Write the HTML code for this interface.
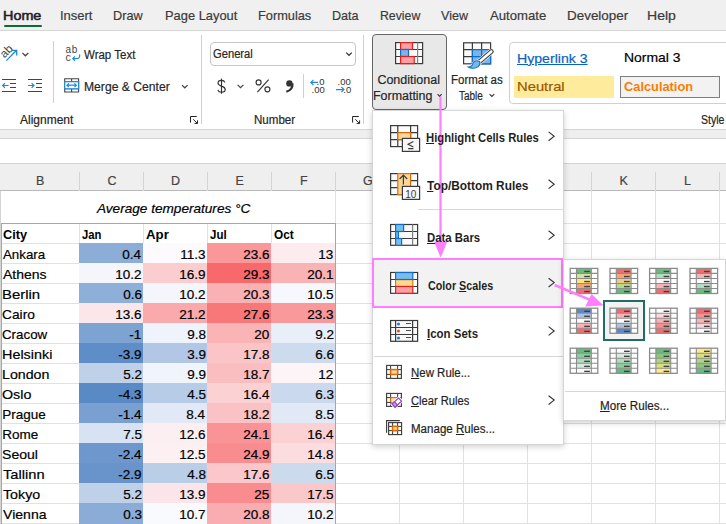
<!DOCTYPE html>
<html><head><meta charset="utf-8"><style>
*{margin:0;padding:0;box-sizing:border-box}
html,body{width:726px;height:524px;overflow:hidden;background:#fff;position:relative;font-family:"Liberation Sans", sans-serif}
.a{position:absolute}
.t{position:absolute;white-space:pre;transform-origin:0 0;-webkit-text-stroke:0.2px currentColor}
.b{-webkit-text-stroke:0}
u{text-decoration:underline;text-underline-offset:1px}
svg{position:absolute;overflow:visible}
</style></head><body>
<!-- tab bar -->
<div class=a style="left:0;top:0;width:726px;height:30px;background:#f0f0f0"></div>
<div class=a style="left:0;top:30px;width:726px;height:1px;background:#d6d6d6"></div>
<div class=a style="left:4px;top:25px;width:38px;height:2px;background:#0e6b38;border-radius:1px"></div>
<!-- ribbon bottom -->
<div class=a style="left:0;top:129px;width:726px;height:1px;background:#d4d4d4"></div>
<div class=a style="left:0;top:130px;width:726px;height:8px;background:#efefef"></div>
<div class=a style="left:0;top:138px;width:726px;height:1px;background:#d4d4d4"></div>
<div class=a style="left:0;top:163px;width:726px;height:1px;background:#d4d4d4"></div>
<div class=a style="left:0;top:164px;width:726px;height:26px;background:#efefef"></div>
<div class=a style="left:0;top:190px;width:726px;height:1px;background:#b9b9b9"></div>
<div class=a style='left:79px;top:172px;width:1px;height:18px;background:#d4d4d4'></div>
<div class=a style='left:143px;top:172px;width:1px;height:18px;background:#d4d4d4'></div>
<div class=a style='left:207px;top:172px;width:1px;height:18px;background:#d4d4d4'></div>
<div class=a style='left:271px;top:172px;width:1px;height:18px;background:#d4d4d4'></div>
<div class=a style='left:335px;top:172px;width:1px;height:18px;background:#d4d4d4'></div>
<div class=a style='left:399px;top:172px;width:1px;height:18px;background:#d4d4d4'></div>
<div class=a style='left:463px;top:172px;width:1px;height:18px;background:#d4d4d4'></div>
<div class=a style='left:527px;top:172px;width:1px;height:18px;background:#d4d4d4'></div>
<div class=a style='left:591px;top:172px;width:1px;height:18px;background:#d4d4d4'></div>
<div class=a style='left:655px;top:172px;width:1px;height:18px;background:#d4d4d4'></div>
<div class=a style='left:719px;top:172px;width:1px;height:18px;background:#d4d4d4'></div>
<!-- grid -->
<div class=a style='left:79px;top:190px;width:1px;height:334px;background:#e1e1e1'></div>
<div class=a style='left:143px;top:190px;width:1px;height:334px;background:#e1e1e1'></div>
<div class=a style='left:207px;top:190px;width:1px;height:334px;background:#e1e1e1'></div>
<div class=a style='left:271px;top:190px;width:1px;height:334px;background:#e1e1e1'></div>
<div class=a style='left:335px;top:190px;width:1px;height:334px;background:#e1e1e1'></div>
<div class=a style='left:399px;top:190px;width:1px;height:334px;background:#e1e1e1'></div>
<div class=a style='left:463px;top:190px;width:1px;height:334px;background:#e1e1e1'></div>
<div class=a style='left:527px;top:190px;width:1px;height:334px;background:#e1e1e1'></div>
<div class=a style='left:591px;top:190px;width:1px;height:334px;background:#e1e1e1'></div>
<div class=a style='left:655px;top:190px;width:1px;height:334px;background:#e1e1e1'></div>
<div class=a style='left:719px;top:190px;width:1px;height:334px;background:#e1e1e1'></div>
<div class=a style='left:0px;top:223px;width:726px;height:1px;background:#e1e1e1'></div>
<div class=a style='left:0px;top:243px;width:726px;height:1px;background:#e1e1e1'></div>
<div class=a style='left:0px;top:263px;width:726px;height:1px;background:#e1e1e1'></div>
<div class=a style='left:0px;top:283px;width:726px;height:1px;background:#e1e1e1'></div>
<div class=a style='left:0px;top:303px;width:726px;height:1px;background:#e1e1e1'></div>
<div class=a style='left:0px;top:323px;width:726px;height:1px;background:#e1e1e1'></div>
<div class=a style='left:0px;top:343px;width:726px;height:1px;background:#e1e1e1'></div>
<div class=a style='left:0px;top:363px;width:726px;height:1px;background:#e1e1e1'></div>
<div class=a style='left:0px;top:383px;width:726px;height:1px;background:#e1e1e1'></div>
<div class=a style='left:0px;top:403px;width:726px;height:1px;background:#e1e1e1'></div>
<div class=a style='left:0px;top:423px;width:726px;height:1px;background:#e1e1e1'></div>
<div class=a style='left:0px;top:443px;width:726px;height:1px;background:#e1e1e1'></div>
<div class=a style='left:0px;top:463px;width:726px;height:1px;background:#e1e1e1'></div>
<div class=a style='left:0px;top:483px;width:726px;height:1px;background:#e1e1e1'></div>
<div class=a style='left:0px;top:503px;width:726px;height:1px;background:#e1e1e1'></div>
<div class=a style='left:0px;top:523px;width:726px;height:1px;background:#e1e1e1'></div>
<div class=a style="left:1px;top:191px;width:334px;height:32px;background:#fff"></div>
<div class=a style='left:79px;top:243px;width:64px;height:21px;background:#8cadd8'></div>
<div class=a style='left:79px;top:263px;width:64px;height:21px;background:#f4f6fc'></div>
<div class=a style='left:79px;top:283px;width:64px;height:21px;background:#8eafd8'></div>
<div class=a style='left:79px;top:303px;width:64px;height:21px;background:#fbe7ea'></div>
<div class=a style='left:79px;top:323px;width:64px;height:21px;background:#7da3d2'></div>
<div class=a style='left:79px;top:343px;width:64px;height:21px;background:#5e8dc7'></div>
<div class=a style='left:79px;top:363px;width:64px;height:21px;background:#bfd1e9'></div>
<div class=a style='left:79px;top:383px;width:64px;height:21px;background:#5a8ac6'></div>
<div class=a style='left:79px;top:403px;width:64px;height:21px;background:#79a0d1'></div>
<div class=a style='left:79px;top:423px;width:64px;height:21px;background:#d7e2f2'></div>
<div class=a style='left:79px;top:443px;width:64px;height:21px;background:#6e98cd'></div>
<div class=a style='left:79px;top:463px;width:64px;height:21px;background:#6994cb'></div>
<div class=a style='left:79px;top:483px;width:64px;height:21px;background:#bfd1e9'></div>
<div class=a style='left:79px;top:503px;width:64px;height:21px;background:#8bacd7'></div>
<div class=a style='left:143px;top:243px;width:64px;height:21px;background:#fcfafd'></div>
<div class=a style='left:143px;top:263px;width:64px;height:21px;background:#fbcdcf'></div>
<div class=a style='left:143px;top:283px;width:64px;height:21px;background:#f4f6fc'></div>
<div class=a style='left:143px;top:303px;width:64px;height:21px;background:#faaaad'></div>
<div class=a style='left:143px;top:323px;width:64px;height:21px;background:#eff3fb'></div>
<div class=a style='left:143px;top:343px;width:64px;height:21px;background:#b1c7e5'></div>
<div class=a style='left:143px;top:363px;width:64px;height:21px;background:#f0f4fb'></div>
<div class=a style='left:143px;top:383px;width:64px;height:21px;background:#b7cce7'></div>
<div class=a style='left:143px;top:403px;width:64px;height:21px;background:#e0e9f5'></div>
<div class=a style='left:143px;top:423px;width:64px;height:21px;background:#fceff2'></div>
<div class=a style='left:143px;top:443px;width:64px;height:21px;background:#fcf0f3'></div>
<div class=a style='left:143px;top:463px;width:64px;height:21px;background:#bacee8'></div>
<div class=a style='left:143px;top:483px;width:64px;height:21px;background:#fbe5e8'></div>
<div class=a style='left:143px;top:503px;width:64px;height:21px;background:#f9fafe'></div>
<div class=a style='left:207px;top:243px;width:64px;height:21px;background:#f99799'></div>
<div class=a style='left:207px;top:263px;width:64px;height:21px;background:#f8696b'></div>
<div class=a style='left:207px;top:283px;width:64px;height:21px;background:#fab1b4'></div>
<div class=a style='left:207px;top:303px;width:64px;height:21px;background:#f87779'></div>
<div class=a style='left:207px;top:323px;width:64px;height:21px;background:#fab4b6'></div>
<div class=a style='left:207px;top:343px;width:64px;height:21px;background:#fbc5c8'></div>
<div class=a style='left:207px;top:363px;width:64px;height:21px;background:#fabec1'></div>
<div class=a style='left:207px;top:383px;width:64px;height:21px;background:#fbd1d3'></div>
<div class=a style='left:207px;top:403px;width:64px;height:21px;background:#fac2c5'></div>
<div class=a style='left:207px;top:423px;width:64px;height:21px;background:#f99395'></div>
<div class=a style='left:207px;top:443px;width:64px;height:21px;background:#f98c8f'></div>
<div class=a style='left:207px;top:463px;width:64px;height:21px;background:#fbc7ca'></div>
<div class=a style='left:207px;top:483px;width:64px;height:21px;background:#f98c8e'></div>
<div class=a style='left:207px;top:503px;width:64px;height:21px;background:#faadb0'></div>
<div class=a style='left:271px;top:243px;width:64px;height:21px;background:#fcecef'></div>
<div class=a style='left:271px;top:263px;width:64px;height:21px;background:#fab3b5'></div>
<div class=a style='left:271px;top:283px;width:64px;height:21px;background:#f7f8fd'></div>
<div class=a style='left:271px;top:303px;width:64px;height:21px;background:#f9999c'></div>
<div class=a style='left:271px;top:323px;width:64px;height:21px;background:#e9eff8'></div>
<div class=a style='left:271px;top:343px;width:64px;height:21px;background:#cddbef'></div>
<div class=a style='left:271px;top:363px;width:64px;height:21px;background:#fcf4f7'></div>
<div class=a style='left:271px;top:383px;width:64px;height:21px;background:#cad9ed'></div>
<div class=a style='left:271px;top:403px;width:64px;height:21px;background:#e2e9f6'></div>
<div class=a style='left:271px;top:423px;width:64px;height:21px;background:#fbd1d3'></div>
<div class=a style='left:271px;top:443px;width:64px;height:21px;background:#fbdde0'></div>
<div class=a style='left:271px;top:463px;width:64px;height:21px;background:#ccdaee'></div>
<div class=a style='left:271px;top:483px;width:64px;height:21px;background:#fbc8ca'></div>
<div class=a style='left:271px;top:503px;width:64px;height:21px;background:#f4f6fc'></div>
<!-- table borders -->
<div class=a style="left:1px;top:223px;width:335px;height:1px;background:#a6a6a6"></div>
<div class=a style="left:1px;top:223px;width:1px;height:301px;background:#a6a6a6"></div>
<div class=a style="left:335px;top:223px;width:1px;height:301px;background:#a6a6a6"></div>
<div class=a style="left:0;top:191px;width:1px;height:333px;background:#d4d4d4"></div>
<!-- ribbon dividers -->
<div class=a style="left:53px;top:41px;width:1px;height:62px;background:#d0d0d0"></div>
<div class=a style="left:201px;top:35px;width:1px;height:89px;background:#d0d0d0"></div>
<div class=a style="left:363px;top:35px;width:1px;height:89px;background:#d0d0d0"></div>
<div class=a style="left:303px;top:74px;width:1px;height:24px;background:#d0d0d0"></div>
<div class=a style="left:210px;top:42px;width:146px;height:24px;border:1px solid #c6c6c6;border-radius:4px"></div>
<!-- CF button -->
<div class=a style="left:372px;top:34px;width:75px;height:76px;background:#e8e8e8;border:1px solid #666;border-radius:4px"></div>
<!-- style gallery -->
<div class=a style="left:509px;top:42px;width:230px;height:62px;border:1px solid #d0d0d0;border-radius:4px"></div>
<div class=a style="left:514px;top:76px;width:100px;height:22px;background:#ffeb9c"></div>
<div class=a style="left:620px;top:76px;width:100px;height:22px;background:#f2f2f2;border:1px solid #7f7f7f"></div>
<svg style="left:0;top:0" width="726" height="524" viewBox="0 0 726 524">
<g fill="none" stroke-linecap="butt">
<!-- orientation icon -->
<text x="0" y="0" transform="translate(4.4,58.6) rotate(-45)" font-family="Liberation Sans" font-size="11.6" fill="#444">ab</text>
<path d="M6.3 60.6 L16.6 50.3 M11.6 50.4 H16.7 V55.4" stroke="#1e88d8" stroke-width="1.3"/>
<path d="M22.5 53 L25.4 55.8 L28.3 53" stroke="#444" stroke-width="1.2"/>
<!-- decrease indent -->
<path d="M2 79.5 H16 M10 83.5 H16 M10 87.5 H16 M2 91.5 H16" stroke="#444" stroke-width="1"/>
<path d="M8.6 85.5 H2.6 M5 83.1 L2.6 85.5 L5 87.9" stroke="#1e88d8" stroke-width="1.2"/>
<!-- increase indent -->
<path d="M28 79.5 H42 M36 83.5 H42 M36 87.5 H42 M28 91.5 H42" stroke="#444" stroke-width="1"/>
<path d="M28 85.5 H34 M31.6 83.1 L34 85.5 L31.6 87.9" stroke="#1e88d8" stroke-width="1.2"/>
<!-- wrap text -->
<text x="65.6" y="53.4" font-family="Liberation Sans" font-size="10" letter-spacing="0.6" fill="#444">ab</text>
<text x="65.6" y="61" font-family="Liberation Sans" font-size="10.5" fill="#444">c</text>
<path d="M79.6 54.4 Q80.5 58.6 76 58.6 H72.8 M75 56.4 L72.8 58.6 L75 60.8" stroke="#1e88d8" stroke-width="1.2"/>
<!-- merge & center -->
<path d="M64.7 78.7 H78.6 V92 H64.7 Z M64.7 81.7 H78.6 M64.7 88.8 H78.6 M71.6 78.7 V81.7 M71.6 88.8 V92" stroke="#444" stroke-width="1.1"/>
<rect x="64.7" y="81.7" width="13.9" height="7.1" stroke="#1e88d8" stroke-width="1.2" fill="#fff"/>
<path d="M67 85.2 H76.3 M68.8 83.4 L67 85.2 L68.8 87 M74.5 83.4 L76.3 85.2 L74.5 87" stroke="#1e88d8" stroke-width="1.2"/>
<path d="M182 85.1 L184.8 87.8 L187.6 85.1" stroke="#444" stroke-width="1.2"/>
<!-- launchers -->
<path d="M190.5 122.6 V116.5 H196.7 M193.2 119.3 L197.3 123.3 M194.5 123.4 H197.5 V120.4" stroke="#222" stroke-width="1"/>
<path d="M352.6 122.6 V116.5 H358.8 M355.3 119.3 L359.4 123.3 M356.6 123.4 H359.6 V120.4" stroke="#222" stroke-width="1"/>
<!-- general chevron -->
<path d="M346.2 52.6 L349 55.3 L351.8 52.6" stroke="#333" stroke-width="1.2"/>
<!-- $ chevron -->
<path d="M237.6 84.8 L240.5 87.7 L243.4 84.8" stroke="#444" stroke-width="1.2"/>
<!-- comma style -->
<path d="M289.6 80.6 a3.4 3.4 0 1 1 0 6.4 c 1.6 0.6 3.4 -0.3 4.6 -3" stroke="none" fill="none"/>
<circle cx="289.4" cy="83.4" r="3.2" fill="#333"/>
<path d="M292.5 83.4 C292.8 87.8 290.5 90.6 286.3 91.8" stroke="#333" stroke-width="2.2"/>
<!-- decimal icons -->
<path d="M318 82.4 H310.8 M313.4 79.8 L310.8 82.4 L313.4 85" stroke="#1e88d8" stroke-width="1.1"/>
<path d="M336 89.6 H344 M341.4 87 L344 89.6 L341.4 92.2" stroke="#1e88d8" stroke-width="1.1"/>
<!-- CF chevron -->
<path d="M437.6 94.2 L439.6 96.4 L441.6 94.2" stroke="#333" stroke-width="1.1"/>
<!-- FaT chevron -->
<path d="M489.6 94.1 L491.9 96.5 L494.2 94.1" stroke="#333" stroke-width="1.1"/>
</g>
<g font-family="Liberation Sans" fill="#333">


<text x="316.6" y="84.9" font-size="9.5">.0</text>
<text x="311.5" y="93" font-size="9.5">.00</text>
<text x="337.5" y="84.9" font-size="9.5">.00</text>
<text x="343.3" y="93" font-size="9.5">.0</text>
</g>
<g fill="none" stroke="#333" stroke-width="1.15">
<path d="M221.5 78.6 V93.8"/>
<path d="M225 82.4 C224.4 80.9 223 80.3 221.4 80.3 C219.4 80.3 218 81.4 218 83.1 C218 85 219.8 85.6 221.6 86.1 C223.6 86.7 225.2 87.4 225.2 89.5 C225.2 91.3 223.6 92.2 221.6 92.2 C219.8 92.2 218.4 91.5 217.8 90"/>
<circle cx="258.6" cy="82.4" r="2.5"/>
<circle cx="267.4" cy="89.3" r="2.5"/>
<path d="M268.6 79.6 L257.4 92.2"/>
</g>
<!-- CF icon -->
<g stroke-width="1.2">
<rect x="395.6" y="42.6" width="27" height="21" fill="#fafafa" stroke="#3a3a3a"/>
<path d="M395.6 49.5 H422.6 M395.6 56.5 H422.6 M400.6 42.6 V63.6" stroke="#3a3a3a" fill="none"/>
<path d="M417.6 42.6 V63.6" stroke="#888" fill="none"/>
<rect x="400.6" y="42.6" width="11.9" height="6.9" fill="#ff9ea3" stroke="#e0201b"/>
<rect x="400.6" y="49.5" width="7.9" height="7" fill="#7cb4e8" stroke="#0b6fce"/>
<rect x="400.6" y="56.5" width="13.6" height="7.1" fill="#ff9ea3" stroke="#e0201b"/>
</g>
<!-- Format as table icon -->
<g stroke-width="1.2">
<rect x="463.6" y="42.8" width="27" height="21" fill="#fafafa" stroke="#3a3a3a"/>
<path d="M463.6 49.6 H490.6 M463.6 56.6 H490.6 M472.4 42.8 V63.8 M481.6 42.8 V63.8" stroke="#3a3a3a" fill="none"/>
<path d="M472.4 49.6 H490.6 V63.8 H472.4 Z" fill="#7cb4e8" stroke="#0b6fce"/>
<path d="M481.6 49.6 V63.8 M472.4 56.6 H490.6" stroke="#0b6fce" fill="none"/>
<g transform="translate(485.6 56.4) rotate(-40.8)"><rect x="-11" y="-2.9" width="21" height="5.8" rx="2.9" fill="#fff"/><rect x="-9.6" y="-1.8" width="19" height="3.6" rx="1.8" fill="#fff" stroke="#3a3a3a" stroke-width="1.1"/></g>
<path d="M479.6 61.6 C476.4 59.8 473.2 61.2 472.6 64 C472.2 65.8 470.8 66.8 468.2 67 C470.4 68.6 475.6 68.9 478.2 66.6 C479.8 65.2 480.4 63.2 479.6 61.6 Z" fill="#fff" stroke="#fff" stroke-width="2"/>
<path d="M479.6 61.6 C476.4 59.8 473.2 61.2 472.6 64 C472.2 65.8 470.8 66.8 468.2 67 C470.4 68.6 475.6 68.9 478.2 66.6 C479.8 65.2 480.4 63.2 479.6 61.6 Z" fill="#7cb4e8" stroke="#0b6fce" stroke-width="1.1"/>
</g>
</svg>

<div class='t' style='top:9.25px;font-size:13px;line-height:13px;color:#1f1f1f;left:3.39px;transform:scaleX(1.106);-webkit-text-stroke:0.55px currentColor;'>Home</div>
<div class='t' style='top:9.25px;font-size:13px;line-height:13px;color:#3b3b3b;left:59.90px;'>Insert</div>
<div class='t' style='top:9.25px;font-size:13px;line-height:13px;color:#3b3b3b;left:113.32px;transform:scaleX(0.977);'>Draw</div>
<div class='t' style='top:9.25px;font-size:13px;line-height:13px;color:#3b3b3b;left:165.01px;transform:scaleX(0.990);'>Page Layout</div>
<div class='t' style='top:9.25px;font-size:13px;line-height:13px;color:#3b3b3b;left:258.42px;transform:scaleX(0.983);'>Formulas</div>
<div class='t' style='top:9.25px;font-size:13px;line-height:13px;color:#3b3b3b;left:332.33px;transform:scaleX(0.967);'>Data</div>
<div class='t' style='top:9.25px;font-size:13px;line-height:13px;color:#3b3b3b;left:379.85px;transform:scaleX(0.945);'>Review</div>
<div class='t' style='top:9.25px;font-size:13px;line-height:13px;color:#3b3b3b;left:441.00px;transform:scaleX(0.964);'>View</div>
<div class='t' style='top:9.25px;font-size:13px;line-height:13px;color:#3b3b3b;left:490.00px;transform:scaleX(1.011);'>Automate</div>
<div class='t' style='top:9.25px;font-size:13px;line-height:13px;color:#3b3b3b;left:566.57px;transform:scaleX(1.033);'>Developer</div>
<div class='t' style='top:9.25px;font-size:13px;line-height:13px;color:#3b3b3b;left:646.92px;transform:scaleX(1.080);'>Help</div>
<div class='t' style='top:48.67px;font-size:12.5px;line-height:12.5px;color:#262626;left:84.10px;transform:scaleX(0.920);'>Wrap Text</div>
<div class='t' style='top:81.28px;font-size:12.5px;line-height:12.5px;color:#262626;left:83.53px;transform:scaleX(0.971);'>Merge &amp; Center</div>
<div class='t' style='top:114.30px;font-size:12px;line-height:12px;color:#262626;left:20.00px;'>Alignment</div>
<div class='t' style='top:47.98px;font-size:12.5px;line-height:12.5px;color:#262626;left:213.10px;transform:scaleX(0.895);'>General</div>
<div class='t' style='top:113.80px;font-size:12px;line-height:12px;color:#262626;left:253.54px;transform:scaleX(0.964);'>Number</div>
<div class='t' style='top:74.38px;font-size:12.5px;line-height:12.5px;color:#262626;left:377.40px;'>Conditional</div>
<div class='t' style='top:90.38px;font-size:12.5px;line-height:12.5px;color:#262626;left:373.31px;transform:scaleX(0.995);'>Formatting</div>
<div class='t' style='top:74.38px;font-size:12.5px;line-height:12.5px;color:#262626;left:450.88px;transform:scaleX(0.920);'>Format as</div>
<div class='t' style='top:89.97px;font-size:12.5px;line-height:12.5px;color:#262626;left:459.00px;transform:scaleX(0.800);'>Table</div>
<div class='t' style='top:51.52px;font-size:13.5px;line-height:13.5px;color:#0563c1;left:517.45px;transform:scaleX(1.045);'><u>Hyperlink 3</u></div>
<div class='t' style='top:51.23px;font-size:13.5px;line-height:13.5px;color:#000000;left:623.67px;transform:scaleX(1.032);'>Normal 3</div>
<div class='t' style='top:79.73px;font-size:13.5px;line-height:13.5px;color:#9c5700;left:517.40px;transform:scaleX(1.095);'>Neutral</div>
<div class='t b' style='top:79.55px;font-size:13px;line-height:13px;font-weight:700;color:#fa7d00;left:624.00px;transform:scaleX(0.986);'>Calculation</div>
<div class='t' style='top:113.60px;font-size:12px;line-height:12px;color:#262626;left:700.62px;transform:scaleX(0.880);'>Style</div>
<div class='t' style='top:174.97px;font-size:12.5px;line-height:12.5px;color:#444444;left:36.00px;'>B</div>
<div class='t' style='top:174.97px;font-size:12.5px;line-height:12.5px;color:#444444;left:107.50px;'>C</div>
<div class='t' style='top:174.97px;font-size:12.5px;line-height:12.5px;color:#444444;left:171.00px;'>D</div>
<div class='t' style='top:174.97px;font-size:12.5px;line-height:12.5px;color:#444444;left:235.50px;'>E</div>
<div class='t' style='top:174.97px;font-size:12.5px;line-height:12.5px;color:#444444;left:300.00px;'>F</div>
<div class='t' style='top:174.97px;font-size:12.5px;line-height:12.5px;color:#444444;left:363.00px;'>G</div>
<div class='t' style='top:174.97px;font-size:12.5px;line-height:12.5px;color:#444444;left:619.50px;'>K</div>
<div class='t' style='top:174.97px;font-size:12.5px;line-height:12.5px;color:#444444;left:684.00px;'>L</div>
<div class='t' style='top:201.83px;font-size:13.5px;line-height:13.5px;font-style:italic;color:#000000;left:97.00px;transform:scaleX(1.007);'>Average temperatures °C</div>
<div class='t b' style='top:227.65px;font-size:13px;line-height:13px;font-weight:700;color:#000000;left:3.20px;transform:scaleX(0.979);'>City</div>
<div class='t b' style='top:227.65px;font-size:13px;line-height:13px;font-weight:700;color:#000000;left:82.10px;transform:scaleX(0.864);'>Jan</div>
<div class='t b' style='top:227.65px;font-size:13px;line-height:13px;font-weight:700;color:#000000;left:146.20px;transform:scaleX(1.018);'>Apr</div>
<div class='t b' style='top:227.65px;font-size:13px;line-height:13px;font-weight:700;color:#000000;left:210.00px;transform:scaleX(0.889);'>Jul</div>
<div class='t b' style='top:227.65px;font-size:13px;line-height:13px;font-weight:700;color:#000000;left:274.40px;transform:scaleX(0.909);'>Oct</div>
<div class='t' style='top:247.63px;font-size:13.5px;line-height:13.5px;color:#000000;left:3.20px;transform:scaleX(0.984);'>Ankara</div>
<div class='t' style='top:247.63px;font-size:13.5px;line-height:13.5px;color:#000000;left:122.20px;'>0.4</div>
<div class='t' style='top:247.63px;font-size:13.5px;line-height:13.5px;color:#000000;left:180.20px;'>11.3</div>
<div class='t' style='top:247.63px;font-size:13.5px;line-height:13.5px;color:#000000;left:243.20px;'>23.6</div>
<div class='t' style='top:247.63px;font-size:13.5px;line-height:13.5px;color:#000000;left:318.20px;'>13</div>
<div class='t' style='top:267.62px;font-size:13.5px;line-height:13.5px;color:#000000;left:3.20px;transform:scaleX(1.038);'>Athens</div>
<div class='t' style='top:267.62px;font-size:13.5px;line-height:13.5px;color:#000000;left:115.20px;'>10.2</div>
<div class='t' style='top:267.62px;font-size:13.5px;line-height:13.5px;color:#000000;left:179.20px;'>16.9</div>
<div class='t' style='top:267.62px;font-size:13.5px;line-height:13.5px;color:#000000;left:243.20px;'>29.3</div>
<div class='t' style='top:267.62px;font-size:13.5px;line-height:13.5px;color:#000000;left:307.20px;'>20.1</div>
<div class='t' style='top:287.62px;font-size:13.5px;line-height:13.5px;color:#000000;left:2.10px;transform:scaleX(1.103);'>Berlin</div>
<div class='t' style='top:287.62px;font-size:13.5px;line-height:13.5px;color:#000000;left:123.20px;'>0.6</div>
<div class='t' style='top:287.62px;font-size:13.5px;line-height:13.5px;color:#000000;left:179.20px;'>10.2</div>
<div class='t' style='top:287.62px;font-size:13.5px;line-height:13.5px;color:#000000;left:243.20px;'>20.3</div>
<div class='t' style='top:287.62px;font-size:13.5px;line-height:13.5px;color:#000000;left:307.20px;'>10.5</div>
<div class='t' style='top:307.62px;font-size:13.5px;line-height:13.5px;color:#000000;left:2.18px;transform:scaleX(1.019);'>Cairo</div>
<div class='t' style='top:307.62px;font-size:13.5px;line-height:13.5px;color:#000000;left:115.20px;'>13.6</div>
<div class='t' style='top:307.62px;font-size:13.5px;line-height:13.5px;color:#000000;left:179.20px;'>21.2</div>
<div class='t' style='top:307.62px;font-size:13.5px;line-height:13.5px;color:#000000;left:243.20px;'>27.6</div>
<div class='t' style='top:307.62px;font-size:13.5px;line-height:13.5px;color:#000000;left:307.20px;'>23.3</div>
<div class='t' style='top:327.62px;font-size:13.5px;line-height:13.5px;color:#000000;left:2.21px;transform:scaleX(0.987);'>Cracow</div>
<div class='t' style='top:327.62px;font-size:13.5px;line-height:13.5px;color:#000000;left:129.20px;'>-1</div>
<div class='t' style='top:327.62px;font-size:13.5px;line-height:13.5px;color:#000000;left:187.20px;'>9.8</div>
<div class='t' style='top:327.62px;font-size:13.5px;line-height:13.5px;color:#000000;left:254.20px;'>20</div>
<div class='t' style='top:327.62px;font-size:13.5px;line-height:13.5px;color:#000000;left:315.20px;'>9.2</div>
<div class='t' style='top:347.62px;font-size:13.5px;line-height:13.5px;color:#000000;left:2.13px;transform:scaleX(1.065);'>Helsinki</div>
<div class='t' style='top:347.62px;font-size:13.5px;line-height:13.5px;color:#000000;left:118.20px;'>-3.9</div>
<div class='t' style='top:347.62px;font-size:13.5px;line-height:13.5px;color:#000000;left:187.20px;'>3.9</div>
<div class='t' style='top:347.62px;font-size:13.5px;line-height:13.5px;color:#000000;left:243.20px;'>17.8</div>
<div class='t' style='top:347.62px;font-size:13.5px;line-height:13.5px;color:#000000;left:315.20px;'>6.6</div>
<div class='t' style='top:367.62px;font-size:13.5px;line-height:13.5px;color:#000000;left:2.15px;transform:scaleX(1.053);'>London</div>
<div class='t' style='top:367.62px;font-size:13.5px;line-height:13.5px;color:#000000;left:123.20px;'>5.2</div>
<div class='t' style='top:367.62px;font-size:13.5px;line-height:13.5px;color:#000000;left:187.20px;'>9.9</div>
<div class='t' style='top:367.62px;font-size:13.5px;line-height:13.5px;color:#000000;left:243.20px;'>18.7</div>
<div class='t' style='top:367.62px;font-size:13.5px;line-height:13.5px;color:#000000;left:318.20px;'>12</div>
<div class='t' style='top:387.62px;font-size:13.5px;line-height:13.5px;color:#000000;left:2.14px;transform:scaleX(1.058);'>Oslo</div>
<div class='t' style='top:387.62px;font-size:13.5px;line-height:13.5px;color:#000000;left:118.20px;'>-4.3</div>
<div class='t' style='top:387.62px;font-size:13.5px;line-height:13.5px;color:#000000;left:187.20px;'>4.5</div>
<div class='t' style='top:387.62px;font-size:13.5px;line-height:13.5px;color:#000000;left:243.20px;'>16.4</div>
<div class='t' style='top:387.62px;font-size:13.5px;line-height:13.5px;color:#000000;left:315.20px;'>6.3</div>
<div class='t' style='top:407.62px;font-size:13.5px;line-height:13.5px;color:#000000;left:2.20px;'>Prague</div>
<div class='t' style='top:407.62px;font-size:13.5px;line-height:13.5px;color:#000000;left:118.20px;'>-1.4</div>
<div class='t' style='top:407.62px;font-size:13.5px;line-height:13.5px;color:#000000;left:186.20px;'>8.4</div>
<div class='t' style='top:407.62px;font-size:13.5px;line-height:13.5px;color:#000000;left:243.20px;'>18.2</div>
<div class='t' style='top:407.62px;font-size:13.5px;line-height:13.5px;color:#000000;left:315.20px;'>8.5</div>
<div class='t' style='top:427.62px;font-size:13.5px;line-height:13.5px;color:#000000;left:2.20px;'>Rome</div>
<div class='t' style='top:427.62px;font-size:13.5px;line-height:13.5px;color:#000000;left:123.20px;'>7.5</div>
<div class='t' style='top:427.62px;font-size:13.5px;line-height:13.5px;color:#000000;left:179.20px;'>12.6</div>
<div class='t' style='top:427.62px;font-size:13.5px;line-height:13.5px;color:#000000;left:243.20px;'>24.1</div>
<div class='t' style='top:427.62px;font-size:13.5px;line-height:13.5px;color:#000000;left:307.20px;'>16.4</div>
<div class='t' style='top:447.62px;font-size:13.5px;line-height:13.5px;color:#000000;left:2.16px;transform:scaleX(1.042);'>Seoul</div>
<div class='t' style='top:447.62px;font-size:13.5px;line-height:13.5px;color:#000000;left:118.20px;'>-2.4</div>
<div class='t' style='top:447.62px;font-size:13.5px;line-height:13.5px;color:#000000;left:179.20px;'>12.5</div>
<div class='t' style='top:447.62px;font-size:13.5px;line-height:13.5px;color:#000000;left:243.20px;'>24.9</div>
<div class='t' style='top:447.62px;font-size:13.5px;line-height:13.5px;color:#000000;left:307.20px;'>14.8</div>
<div class='t' style='top:467.62px;font-size:13.5px;line-height:13.5px;color:#000000;left:3.20px;transform:scaleX(1.087);'>Tallinn</div>
<div class='t' style='top:467.62px;font-size:13.5px;line-height:13.5px;color:#000000;left:118.20px;'>-2.9</div>
<div class='t' style='top:467.62px;font-size:13.5px;line-height:13.5px;color:#000000;left:187.20px;'>4.8</div>
<div class='t' style='top:467.62px;font-size:13.5px;line-height:13.5px;color:#000000;left:243.20px;'>17.6</div>
<div class='t' style='top:467.62px;font-size:13.5px;line-height:13.5px;color:#000000;left:315.20px;'>6.5</div>
<div class='t' style='top:487.62px;font-size:13.5px;line-height:13.5px;color:#000000;left:3.20px;transform:scaleX(1.054);'>Tokyo</div>
<div class='t' style='top:487.62px;font-size:13.5px;line-height:13.5px;color:#000000;left:123.20px;'>5.2</div>
<div class='t' style='top:487.62px;font-size:13.5px;line-height:13.5px;color:#000000;left:179.20px;'>13.9</div>
<div class='t' style='top:487.62px;font-size:13.5px;line-height:13.5px;color:#000000;left:254.20px;'>25</div>
<div class='t' style='top:487.62px;font-size:13.5px;line-height:13.5px;color:#000000;left:307.20px;'>17.5</div>
<div class='t' style='top:507.62px;font-size:13.5px;line-height:13.5px;color:#000000;left:3.20px;transform:scaleX(1.043);'>Vienna</div>
<div class='t' style='top:507.62px;font-size:13.5px;line-height:13.5px;color:#000000;left:123.20px;'>0.3</div>
<div class='t' style='top:507.62px;font-size:13.5px;line-height:13.5px;color:#000000;left:179.20px;'>10.7</div>
<div class='t' style='top:507.62px;font-size:13.5px;line-height:13.5px;color:#000000;left:243.20px;'>20.8</div>
<div class='t' style='top:507.62px;font-size:13.5px;line-height:13.5px;color:#000000;left:307.20px;'>10.2</div>
<!-- menu -->
<div class=a style="left:372px;top:110px;width:192px;height:335px;background:#fff;border:1px solid #d6d6d6;box-shadow:0 2px 6px rgba(0,0,0,.18)"></div>
<div class=a style="left:418px;top:209px;width:145px;height:1px;background:#d8d8d8"></div>
<div class=a style="left:374px;top:356px;width:189px;height:1px;background:#d8d8d8"></div>
<div class=a style="left:372px;top:258px;width:191px;height:50px;background:#f2f2f2;border:2px solid #ff7dff"></div>
<!-- submenu -->
<div class=a style="left:563px;top:259px;width:163px;height:162px;background:#fff;border:1px solid #d6d6d6;box-shadow:0 2px 6px rgba(0,0,0,.18)"></div>
<div class=a style="left:565px;top:391px;width:160px;height:1px;background:#d8d8d8"></div>
<div class=a style="left:603px;top:300px;width:42px;height:41px;background:#f3f3f3;border:2px solid #1e6e66"></div>
<svg style="left:0;top:0" width="726" height="524" viewBox="0 0 726 524">
<rect x="390.6" y="125.6" width="27" height="21" fill="#fafafa" stroke="#3a3a3a" stroke-width="1.2"/>
<path d="M390.6 132.7 H417.6 M390.6 139.6 H417.6 M397.8 125.6 V146.6 M410.6 125.6 V139.4" stroke="#3a3a3a" stroke-width="1.2" fill="none"/>
<rect x="397.8" y="132.7" width="12.8" height="6.9" fill="#fbd89a" stroke="#e06c00" stroke-width="1.2"/>
<rect x="402.4" y="138.4" width="17.2" height="13" fill="#f7f7f7" stroke="#3a3a3a" stroke-width="1.2"/>
<path d="M413.4 141.4 L408 144.2 L413.4 147 M408.2 148.6 H413.4" stroke="#3a3a3a" stroke-width="1.1" fill="none"/>
<rect x="390.6" y="173.6" width="27" height="21" fill="#fafafa" stroke="#3a3a3a" stroke-width="1.2"/>
<path d="M390.6 180.7 H417.6 M390.6 187.6 H417.6" stroke="#3a3a3a" stroke-width="1.2" fill="none"/>
<rect x="397.8" y="173.6" width="12.8" height="21" fill="#fbd89a" stroke="#e06c00" stroke-width="1.2"/>
<path d="M403.4 175.6 V184.6 M399.6 179 L403.4 175.2 L407.2 179" stroke="#3a3a3a" stroke-width="1.2" fill="none"/>
<rect x="402.4" y="186.4" width="17.2" height="13" fill="#f7f7f7" stroke="#3a3a3a" stroke-width="1.2"/>
<text x="405.2" y="197.6" font-family="Liberation Sans" font-size="10" fill="#3a3a3a">10</text>
<rect x="390.6" y="224.5" width="27" height="20.8" fill="#fafafa" stroke="#3a3a3a" stroke-width="1.2"/>
<path d="M390.6 231.5 H417.6 M390.6 238.5 H417.6 M395.6 224.5 V245.3" stroke="#3a3a3a" stroke-width="1.2" fill="none"/>
<path d="M412.6 224.5 V245.3" stroke="#808080" stroke-width="1.2" fill="none"/>
<rect x="395.6" y="224.5" width="8" height="7" fill="#7cbcea" stroke="#0b6fce" stroke-width="1.2"/>
<rect x="395.6" y="231.5" width="2.8" height="7" fill="#7cbcea" stroke="#0b6fce" stroke-width="1.2"/>
<rect x="395.6" y="238.5" width="6" height="6.8" fill="#7cbcea" stroke="#0b6fce" stroke-width="1.2"/>
<rect x="390.6" y="272.5" width="27" height="20.8" fill="#fff" stroke="#3a3a3a" stroke-width="1.2"/>
<path d="M390.6 279.5 H417.6 M390.6 286.5 H417.6" stroke="#3a3a3a" stroke-width="1.2" fill="none"/>
<rect x="395.6" y="279.5" width="17.2" height="7" fill="#fcd98c" stroke="#e47a00" stroke-width="1.2"/>
<rect x="395.6" y="272.5" width="17.2" height="7" fill="#7cbcea" stroke="#0b6fce" stroke-width="1.2"/>
<rect x="395.6" y="286.5" width="17.2" height="6.8" fill="#ff9ea3" stroke="#e0201b" stroke-width="1.2"/>
<rect x="390.6" y="320.5" width="27" height="20.8" fill="#fafafa" stroke="#3a3a3a" stroke-width="1.2"/>
<path d="M390.6 327.5 H417.6 M390.6 334.5 H417.6 M395.6 320.5 V341.3 M412.6 320.5 V341.3" stroke="#3a3a3a" stroke-width="1.2" fill="none"/>
<circle cx="398.5" cy="324" r="1.6" fill="#1a85d6"/>
<path d="M406 323.5 H411" stroke="#505050" stroke-width="1"/>
<circle cx="398.5" cy="331" r="1.6" fill="#f04e30"/>
<path d="M406 330.5 H411" stroke="#505050" stroke-width="1"/>
<circle cx="398.5" cy="338" r="1.6" fill="#1a85d6"/>
<path d="M406 337.5 H411" stroke="#505050" stroke-width="1"/>
<rect x="386.6" y="365.4" width="14.799999999999955" height="13.0" fill="#fafafa" stroke="#3a3a3a" stroke-width="1.1"/>
<path d="M386.6 369.6 H401.4 M386.6 374.4 H401.4 M390.6 365.4 V378.4 M397.6 365.4 V378.4" stroke="#3a3a3a" stroke-width="1" fill="none"/>
<rect x="390.6" y="369.6" width="7" height="4.8" fill="#fbd89a" stroke="#e06c00" stroke-width="1.5"/>
<rect x="386.6" y="393.4" width="14.799999999999955" height="13.0" fill="#fafafa" stroke="#3a3a3a" stroke-width="1.1"/>
<path d="M386.6 397.6 H401.4 M386.6 402.4 H401.4 M390.6 393.4 V406.4 M397.6 393.4 V406.4" stroke="#3a3a3a" stroke-width="1" fill="none"/>
<path d="M390.8 402.4 V397.6 H397.4" fill="none" stroke="#e06c00" stroke-width="1.4"/>
<path d="M391.4 402 V398.2 H397 L391.4 402 Z" fill="#fbd89a"/>
<g transform="translate(396.8 402.6) rotate(-42)"><rect x="-6" y="-3.4" width="12" height="6.8" fill="#fff"/><rect x="-4.4" y="-2.2" width="8.8" height="4.4" fill="#fff" stroke="#9b3fc0" stroke-width="1.2"/><rect x="-4.4" y="-2.2" width="3.2" height="4.4" fill="#c79be0" stroke="#9b3fc0" stroke-width="1.2"/></g>
<path d="M386.6 432.8 V420.6 H399.8" fill="none" stroke="#3a3a3a" stroke-width="1.1"/>
<rect x="388.6" y="422.6" width="13.0" height="12.0" fill="#fafafa" stroke="#3a3a3a" stroke-width="1.1"/>
<path d="M388.6 426.4 H401.6 M388.6 430.6 H401.6 M392.6 422.6 V434.6 M397.6 422.6 V434.6" stroke="#3a3a3a" stroke-width="1" fill="none"/>
<rect x="392.6" y="426.4" width="5" height="4.2" fill="#fbd89a" stroke="#e06c00" stroke-width="1.5"/>
<path d="M548.6 131.9 L554.2 136.3 L548.6 140.70000000000002" fill="none" stroke="#333" stroke-width="1.1"/>
<path d="M548.6 179.79999999999998 L554.2 184.2 L548.6 188.6" fill="none" stroke="#333" stroke-width="1.1"/>
<path d="M548.6 230.79999999999998 L554.2 235.2 L548.6 239.6" fill="none" stroke="#333" stroke-width="1.1"/>
<path d="M548.6 278.20000000000005 L554.2 282.6 L548.6 287.0" fill="none" stroke="#333" stroke-width="1.1"/>
<path d="M548.6 326.6 L554.2 331 L548.6 335.4" fill="none" stroke="#333" stroke-width="1.1"/>
<path d="M548.6 395.70000000000005 L554.2 400.1 L548.6 404.5" fill="none" stroke="#333" stroke-width="1.1"/>
<rect x="570.2" y="268.4" width="27.6" height="25.1" fill="#fff"/>
<rect x="576.5" y="268.40" width="14.8" height="5.02" fill="#63be7b"/>
<path d="M584.2 271.50 H589.9" stroke="#404040" stroke-width="1.4"/>
<rect x="576.5" y="273.42" width="14.8" height="5.02" fill="#d5e39a"/>
<path d="M584.2 276.52 H589.9" stroke="#404040" stroke-width="1.4"/>
<rect x="576.5" y="278.44" width="14.8" height="5.02" fill="#ffe57f"/>
<path d="M584.2 281.54 H589.9" stroke="#404040" stroke-width="1.4"/>
<rect x="576.5" y="283.46" width="14.8" height="5.02" fill="#fba46f"/>
<path d="M584.2 286.56 H589.9" stroke="#404040" stroke-width="1.4"/>
<rect x="576.5" y="288.48" width="14.8" height="5.02" fill="#f8696b"/>
<path d="M584.2 291.58 H589.9" stroke="#404040" stroke-width="1.4"/>
<rect x="570.2" y="268.4" width="27.6" height="25.1" fill="none" stroke="#8c8c8c" stroke-width="1.3"/>
<path d="M570.2 273.42 H597.8000000000001M570.2 278.44 H597.8000000000001M570.2 283.46 H597.8000000000001M570.2 288.48 H597.8000000000001 M576.5 268.4 V293.5 M591.3 268.4 V293.5" stroke="#8c8c8c" stroke-width="1.1" fill="none"/>
<rect x="610.0" y="268.4" width="27.6" height="25.1" fill="#fff"/>
<rect x="616.3" y="268.40" width="14.8" height="5.02" fill="#f8696b"/>
<path d="M624.0 271.50 H629.7" stroke="#404040" stroke-width="1.4"/>
<rect x="616.3" y="273.42" width="14.8" height="5.02" fill="#fba46f"/>
<path d="M624.0 276.52 H629.7" stroke="#404040" stroke-width="1.4"/>
<rect x="616.3" y="278.44" width="14.8" height="5.02" fill="#f3cb7f"/>
<path d="M624.0 281.54 H629.7" stroke="#404040" stroke-width="1.4"/>
<rect x="616.3" y="283.46" width="14.8" height="5.02" fill="#b5dc86"/>
<path d="M624.0 286.56 H629.7" stroke="#404040" stroke-width="1.4"/>
<rect x="616.3" y="288.48" width="14.8" height="5.02" fill="#63be7b"/>
<path d="M624.0 291.58 H629.7" stroke="#404040" stroke-width="1.4"/>
<rect x="610.0" y="268.4" width="27.6" height="25.1" fill="none" stroke="#8c8c8c" stroke-width="1.3"/>
<path d="M610.0 273.42 H637.6M610.0 278.44 H637.6M610.0 283.46 H637.6M610.0 288.48 H637.6 M616.3 268.4 V293.5 M631.1 268.4 V293.5" stroke="#8c8c8c" stroke-width="1.1" fill="none"/>
<rect x="649.6" y="268.4" width="27.6" height="25.1" fill="#fff"/>
<rect x="655.9" y="268.40" width="14.8" height="5.02" fill="#63be7b"/>
<path d="M663.6 271.50 H669.3" stroke="#404040" stroke-width="1.4"/>
<rect x="655.9" y="273.42" width="14.8" height="5.02" fill="#b0ddbd"/>
<path d="M663.6 276.52 H669.3" stroke="#404040" stroke-width="1.4"/>
<rect x="655.9" y="278.44" width="14.8" height="5.02" fill="#fcfcff"/>
<path d="M663.6 281.54 H669.3" stroke="#404040" stroke-width="1.4"/>
<rect x="655.9" y="283.46" width="14.8" height="5.02" fill="#fab2b5"/>
<path d="M663.6 286.56 H669.3" stroke="#404040" stroke-width="1.4"/>
<rect x="655.9" y="288.48" width="14.8" height="5.02" fill="#f8696b"/>
<path d="M663.6 291.58 H669.3" stroke="#404040" stroke-width="1.4"/>
<rect x="649.6" y="268.4" width="27.6" height="25.1" fill="none" stroke="#8c8c8c" stroke-width="1.3"/>
<path d="M649.6 273.42 H677.2M649.6 278.44 H677.2M649.6 283.46 H677.2M649.6 288.48 H677.2 M655.9 268.4 V293.5 M670.7 268.4 V293.5" stroke="#8c8c8c" stroke-width="1.1" fill="none"/>
<rect x="690.0" y="268.4" width="27.6" height="25.1" fill="#fff"/>
<rect x="696.3" y="268.40" width="14.8" height="5.02" fill="#f8696b"/>
<path d="M704.0 271.50 H709.7" stroke="#404040" stroke-width="1.4"/>
<rect x="696.3" y="273.42" width="14.8" height="5.02" fill="#fab2b5"/>
<path d="M704.0 276.52 H709.7" stroke="#404040" stroke-width="1.4"/>
<rect x="696.3" y="278.44" width="14.8" height="5.02" fill="#fcfcff"/>
<path d="M704.0 281.54 H709.7" stroke="#404040" stroke-width="1.4"/>
<rect x="696.3" y="283.46" width="14.8" height="5.02" fill="#b0ddbd"/>
<path d="M704.0 286.56 H709.7" stroke="#404040" stroke-width="1.4"/>
<rect x="696.3" y="288.48" width="14.8" height="5.02" fill="#63be7b"/>
<path d="M704.0 291.58 H709.7" stroke="#404040" stroke-width="1.4"/>
<rect x="690.0" y="268.4" width="27.6" height="25.1" fill="none" stroke="#8c8c8c" stroke-width="1.3"/>
<path d="M690.0 273.42 H717.6M690.0 278.44 H717.6M690.0 283.46 H717.6M690.0 288.48 H717.6 M696.3 268.4 V293.5 M711.1 268.4 V293.5" stroke="#8c8c8c" stroke-width="1.1" fill="none"/>
<rect x="570.2" y="308.2" width="27.6" height="25.1" fill="#fff"/>
<rect x="576.5" y="308.20" width="14.8" height="5.02" fill="#5a8ac6"/>
<path d="M584.2 311.30 H589.9" stroke="#404040" stroke-width="1.4"/>
<rect x="576.5" y="313.22" width="14.8" height="5.02" fill="#abc3e2"/>
<path d="M584.2 316.32 H589.9" stroke="#404040" stroke-width="1.4"/>
<rect x="576.5" y="318.24" width="14.8" height="5.02" fill="#fcfcff"/>
<path d="M584.2 321.34 H589.9" stroke="#404040" stroke-width="1.4"/>
<rect x="576.5" y="323.26" width="14.8" height="5.02" fill="#fab2b5"/>
<path d="M584.2 326.36 H589.9" stroke="#404040" stroke-width="1.4"/>
<rect x="576.5" y="328.28" width="14.8" height="5.02" fill="#f8696b"/>
<path d="M584.2 331.38 H589.9" stroke="#404040" stroke-width="1.4"/>
<rect x="570.2" y="308.2" width="27.6" height="25.1" fill="none" stroke="#8c8c8c" stroke-width="1.3"/>
<path d="M570.2 313.22 H597.8000000000001M570.2 318.24 H597.8000000000001M570.2 323.26 H597.8000000000001M570.2 328.28 H597.8000000000001 M576.5 308.2 V333.3 M591.3 308.2 V333.3" stroke="#8c8c8c" stroke-width="1.1" fill="none"/>
<rect x="610.0" y="308.2" width="27.6" height="25.1" fill="#fff"/>
<rect x="616.3" y="308.20" width="14.8" height="5.02" fill="#f8696b"/>
<path d="M624.0 311.30 H629.7" stroke="#404040" stroke-width="1.4"/>
<rect x="616.3" y="313.22" width="14.8" height="5.02" fill="#fab2b5"/>
<path d="M624.0 316.32 H629.7" stroke="#404040" stroke-width="1.4"/>
<rect x="616.3" y="318.24" width="14.8" height="5.02" fill="#fcfcff"/>
<path d="M624.0 321.34 H629.7" stroke="#404040" stroke-width="1.4"/>
<rect x="616.3" y="323.26" width="14.8" height="5.02" fill="#abc3e2"/>
<path d="M624.0 326.36 H629.7" stroke="#404040" stroke-width="1.4"/>
<rect x="616.3" y="328.28" width="14.8" height="5.02" fill="#5a8ac6"/>
<path d="M624.0 331.38 H629.7" stroke="#404040" stroke-width="1.4"/>
<rect x="610.0" y="308.2" width="27.6" height="25.1" fill="none" stroke="#8c8c8c" stroke-width="1.3"/>
<path d="M610.0 313.22 H637.6M610.0 318.24 H637.6M610.0 323.26 H637.6M610.0 328.28 H637.6 M616.3 308.2 V333.3 M631.1 308.2 V333.3" stroke="#8c8c8c" stroke-width="1.1" fill="none"/>
<rect x="649.6" y="308.2" width="27.6" height="25.1" fill="#fff"/>
<rect x="655.9" y="308.20" width="14.8" height="5.02" fill="#fcfcff"/>
<path d="M663.6 311.30 H669.3" stroke="#404040" stroke-width="1.4"/>
<rect x="655.9" y="313.22" width="14.8" height="5.02" fill="#fbd7da"/>
<path d="M663.6 316.32 H669.3" stroke="#404040" stroke-width="1.4"/>
<rect x="655.9" y="318.24" width="14.8" height="5.02" fill="#fab2b5"/>
<path d="M663.6 321.34 H669.3" stroke="#404040" stroke-width="1.4"/>
<rect x="655.9" y="323.26" width="14.8" height="5.02" fill="#f98e90"/>
<path d="M663.6 326.36 H669.3" stroke="#404040" stroke-width="1.4"/>
<rect x="655.9" y="328.28" width="14.8" height="5.02" fill="#f8696b"/>
<path d="M663.6 331.38 H669.3" stroke="#404040" stroke-width="1.4"/>
<rect x="649.6" y="308.2" width="27.6" height="25.1" fill="none" stroke="#8c8c8c" stroke-width="1.3"/>
<path d="M649.6 313.22 H677.2M649.6 318.24 H677.2M649.6 323.26 H677.2M649.6 328.28 H677.2 M655.9 308.2 V333.3 M670.7 308.2 V333.3" stroke="#8c8c8c" stroke-width="1.1" fill="none"/>
<rect x="690.0" y="308.2" width="27.6" height="25.1" fill="#fff"/>
<rect x="696.3" y="308.20" width="14.8" height="5.02" fill="#f8696b"/>
<path d="M704.0 311.30 H709.7" stroke="#404040" stroke-width="1.4"/>
<rect x="696.3" y="313.22" width="14.8" height="5.02" fill="#f98e90"/>
<path d="M704.0 316.32 H709.7" stroke="#404040" stroke-width="1.4"/>
<rect x="696.3" y="318.24" width="14.8" height="5.02" fill="#fab2b5"/>
<path d="M704.0 321.34 H709.7" stroke="#404040" stroke-width="1.4"/>
<rect x="696.3" y="323.26" width="14.8" height="5.02" fill="#fbd7da"/>
<path d="M704.0 326.36 H709.7" stroke="#404040" stroke-width="1.4"/>
<rect x="696.3" y="328.28" width="14.8" height="5.02" fill="#fcfcff"/>
<path d="M704.0 331.38 H709.7" stroke="#404040" stroke-width="1.4"/>
<rect x="690.0" y="308.2" width="27.6" height="25.1" fill="none" stroke="#8c8c8c" stroke-width="1.3"/>
<path d="M690.0 313.22 H717.6M690.0 318.24 H717.6M690.0 323.26 H717.6M690.0 328.28 H717.6 M696.3 308.2 V333.3 M711.1 308.2 V333.3" stroke="#8c8c8c" stroke-width="1.1" fill="none"/>
<rect x="570.2" y="348.2" width="27.6" height="25.1" fill="#fff"/>
<rect x="576.5" y="348.20" width="14.8" height="5.02" fill="#63be7b"/>
<path d="M584.2 351.30 H589.9" stroke="#404040" stroke-width="1.4"/>
<rect x="576.5" y="353.22" width="14.8" height="5.02" fill="#89ce9c"/>
<path d="M584.2 356.32 H589.9" stroke="#404040" stroke-width="1.4"/>
<rect x="576.5" y="358.24" width="14.8" height="5.02" fill="#b0ddbd"/>
<path d="M584.2 361.34 H589.9" stroke="#404040" stroke-width="1.4"/>
<rect x="576.5" y="363.26" width="14.8" height="5.02" fill="#d6ecde"/>
<path d="M584.2 366.36 H589.9" stroke="#404040" stroke-width="1.4"/>
<rect x="576.5" y="368.28" width="14.8" height="5.02" fill="#fcfcff"/>
<path d="M584.2 371.38 H589.9" stroke="#404040" stroke-width="1.4"/>
<rect x="570.2" y="348.2" width="27.6" height="25.1" fill="none" stroke="#8c8c8c" stroke-width="1.3"/>
<path d="M570.2 353.22 H597.8000000000001M570.2 358.24 H597.8000000000001M570.2 363.26 H597.8000000000001M570.2 368.28 H597.8000000000001 M576.5 348.2 V373.3 M591.3 348.2 V373.3" stroke="#8c8c8c" stroke-width="1.1" fill="none"/>
<rect x="610.0" y="348.2" width="27.6" height="25.1" fill="#fff"/>
<rect x="616.3" y="348.20" width="14.8" height="5.02" fill="#fcfcff"/>
<path d="M624.0 351.30 H629.7" stroke="#404040" stroke-width="1.4"/>
<rect x="616.3" y="353.22" width="14.8" height="5.02" fill="#d6ecde"/>
<path d="M624.0 356.32 H629.7" stroke="#404040" stroke-width="1.4"/>
<rect x="616.3" y="358.24" width="14.8" height="5.02" fill="#b0ddbd"/>
<path d="M624.0 361.34 H629.7" stroke="#404040" stroke-width="1.4"/>
<rect x="616.3" y="363.26" width="14.8" height="5.02" fill="#89ce9c"/>
<path d="M624.0 366.36 H629.7" stroke="#404040" stroke-width="1.4"/>
<rect x="616.3" y="368.28" width="14.8" height="5.02" fill="#63be7b"/>
<path d="M624.0 371.38 H629.7" stroke="#404040" stroke-width="1.4"/>
<rect x="610.0" y="348.2" width="27.6" height="25.1" fill="none" stroke="#8c8c8c" stroke-width="1.3"/>
<path d="M610.0 353.22 H637.6M610.0 358.24 H637.6M610.0 363.26 H637.6M610.0 368.28 H637.6 M616.3 348.2 V373.3 M631.1 348.2 V373.3" stroke="#8c8c8c" stroke-width="1.1" fill="none"/>
<rect x="649.6" y="348.2" width="27.6" height="25.1" fill="#fff"/>
<rect x="655.9" y="348.20" width="14.8" height="5.02" fill="#63be7b"/>
<path d="M663.6 351.30 H669.3" stroke="#404040" stroke-width="1.4"/>
<rect x="655.9" y="353.22" width="14.8" height="5.02" fill="#8ac97d"/>
<path d="M663.6 356.32 H669.3" stroke="#404040" stroke-width="1.4"/>
<rect x="655.9" y="358.24" width="14.8" height="5.02" fill="#b1d480"/>
<path d="M663.6 361.34 H669.3" stroke="#404040" stroke-width="1.4"/>
<rect x="655.9" y="363.26" width="14.8" height="5.02" fill="#d8e082"/>
<path d="M663.6 366.36 H669.3" stroke="#404040" stroke-width="1.4"/>
<rect x="655.9" y="368.28" width="14.8" height="5.02" fill="#ffeb84"/>
<path d="M663.6 371.38 H669.3" stroke="#404040" stroke-width="1.4"/>
<rect x="649.6" y="348.2" width="27.6" height="25.1" fill="none" stroke="#8c8c8c" stroke-width="1.3"/>
<path d="M649.6 353.22 H677.2M649.6 358.24 H677.2M649.6 363.26 H677.2M649.6 368.28 H677.2 M655.9 348.2 V373.3 M670.7 348.2 V373.3" stroke="#8c8c8c" stroke-width="1.1" fill="none"/>
<rect x="690.0" y="348.2" width="27.6" height="25.1" fill="#fff"/>
<rect x="696.3" y="348.20" width="14.8" height="5.02" fill="#ffeb84"/>
<path d="M704.0 351.30 H709.7" stroke="#404040" stroke-width="1.4"/>
<rect x="696.3" y="353.22" width="14.8" height="5.02" fill="#d8e082"/>
<path d="M704.0 356.32 H709.7" stroke="#404040" stroke-width="1.4"/>
<rect x="696.3" y="358.24" width="14.8" height="5.02" fill="#b1d480"/>
<path d="M704.0 361.34 H709.7" stroke="#404040" stroke-width="1.4"/>
<rect x="696.3" y="363.26" width="14.8" height="5.02" fill="#8ac97d"/>
<path d="M704.0 366.36 H709.7" stroke="#404040" stroke-width="1.4"/>
<rect x="696.3" y="368.28" width="14.8" height="5.02" fill="#63be7b"/>
<path d="M704.0 371.38 H709.7" stroke="#404040" stroke-width="1.4"/>
<rect x="690.0" y="348.2" width="27.6" height="25.1" fill="none" stroke="#8c8c8c" stroke-width="1.3"/>
<path d="M690.0 353.22 H717.6M690.0 358.24 H717.6M690.0 363.26 H717.6M690.0 368.28 H717.6 M696.3 348.2 V373.3 M711.1 348.2 V373.3" stroke="#8c8c8c" stroke-width="1.1" fill="none"/>
</svg>
<svg style="left:0;top:0" width="726" height="524" viewBox="0 0 726 524">
<path d="M440.5 96.5 V246" stroke="#ff80ff" stroke-width="2.2" fill="none"/>
<path d="M434.2 241.8 L447.2 241.8 L440.6 257.8 Z" fill="#ff80ff"/>
<path d="M554.6 285 L592 300.6" stroke="#ff80ff" stroke-width="2.6" fill="none"/>
<path d="M591.6 294 L603.6 305.4 L585.2 306.6 Z" fill="#ff80ff"/>
</svg>

<div class='t b' style='top:132.36px;font-size:12.4px;line-height:12.4px;font-weight:700;color:#1f1f1f;left:426.39px;transform:scaleX(0.911);'><u>H</u>ighlight Cells Rules</div>
<div class='t b' style='top:180.06px;font-size:12.4px;line-height:12.4px;font-weight:700;color:#1f1f1f;left:427.30px;transform:scaleX(0.959);'><u>T</u>op/Bottom Rules</div>
<div class='t b' style='top:232.26px;font-size:12.4px;line-height:12.4px;font-weight:700;color:#1f1f1f;left:426.68px;transform:scaleX(0.919);'><u>D</u>ata Bars</div>
<div class='t b' style='top:279.66px;font-size:12.4px;line-height:12.4px;font-weight:700;color:#1f1f1f;left:427.60px;transform:scaleX(0.869);'>Color <u>S</u>cales</div>
<div class='t b' style='top:327.56px;font-size:12.4px;line-height:12.4px;font-weight:700;color:#1f1f1f;left:426.67px;transform:scaleX(0.926);'><u>I</u>con Sets</div>
<div class='t' style='top:366.60px;font-size:12px;line-height:12px;color:#1f1f1f;left:410.75px;transform:scaleX(0.955);'><u>N</u>ew Rule...</div>
<div class='t' style='top:394.80px;font-size:12px;line-height:12px;color:#1f1f1f;left:410.77px;transform:scaleX(0.931);'><u>C</u>lear Rules</div>
<div class='t' style='top:422.70px;font-size:12px;line-height:12px;color:#1f1f1f;left:410.74px;transform:scaleX(0.962);'>Manage <u>R</u>ules...</div>
<div class='t' style='top:399.60px;font-size:12px;line-height:12px;color:#1f1f1f;left:600.43px;transform:scaleX(0.971);'><u>M</u>ore Rules...</div>
</body></html>
